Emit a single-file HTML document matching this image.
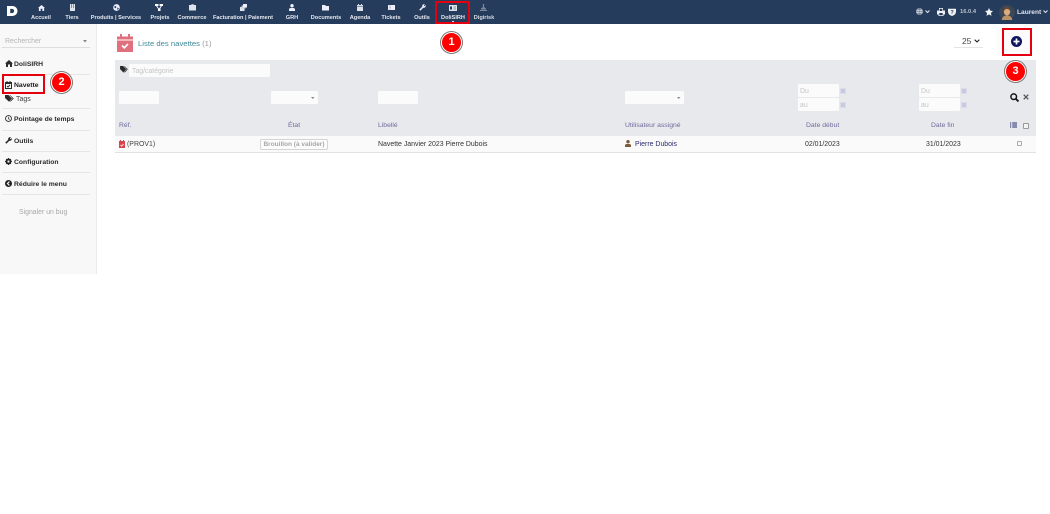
<!DOCTYPE html>
<html lang="fr"><head><meta charset="utf-8"><title>Liste des navettes</title>
<style>
html,body{margin:0;padding:0;background:#fff;width:1050px;height:514px;overflow:hidden;font-family:"Liberation Sans",sans-serif}
.a{position:absolute;white-space:nowrap}
svg{position:absolute;overflow:visible}
#top{position:absolute;left:0;top:0;width:1050px;height:24px;background:#263c5c}
.n{position:absolute;top:14px;width:70px;margin-left:-35px;text-align:center;font-size:5.6px;font-weight:bold;color:#e4e8ee;line-height:8px;white-space:nowrap}
#side{position:absolute;left:0;top:24px;width:96px;height:250px;background:#f8f8f8;border-right:1px solid #ececec}
.m{position:absolute;left:14px;font-size:6.8px;font-weight:bold;color:#2b2b2b;white-space:nowrap;line-height:10px}
.hr{position:absolute;left:2px;width:88px;height:1px;background:#e6e6e6}
.inp{position:absolute;background:#fbfbfb;border-radius:1px}
.th{position:absolute;top:121px;font-size:6.8px;color:#6c6c9c;line-height:10px;white-space:nowrap}
.td{position:absolute;top:140px;font-size:6.95px;color:#333;line-height:10px;white-space:nowrap}
.ph{position:absolute;font-size:6.9px;color:#c4c4c4;line-height:10px}
.cal{position:absolute;width:6px;height:6px;background:#c8c8de;border:1px solid #dcdcec;box-sizing:border-box}
.badge{position:absolute;width:21px;height:21px;border-radius:50%;background:#f00;border:1px solid #fff;box-shadow:0 0 0 1px #777;box-sizing:border-box;color:#fff;font-weight:bold;font-size:11px;line-height:19px;text-align:center}
.red{position:absolute;border:2px solid #e4000f;box-sizing:border-box}
</style></head><body>
<div id="top"></div>
<svg style="left:7px;top:6px" width="11" height="10" viewBox="0 0 12 12" preserveAspectRatio="none"><path fill="#fff" fill-rule="evenodd" d="M0 0H6A5.500 6 0 0 1 6 12H0ZM3.500 3.500V8.500H5.500A2.300 2.500 0 0 0 5.500 3.500Z"/></svg>

<svg style="left:38px;top:5px" width="7" height="6" viewBox="0 0 8 8" preserveAspectRatio="none"><path fill="#eef" d="M4 0 8 4H7V8H5V5H3V8H1V4H0Z"/></svg>
<div class="n" style="left:41px">Accueil</div>
<svg style="left:70px;top:4px" width="5" height="7" viewBox="0 0 5 7"><rect width="5" height="7" fill="#dfe4ea"/><path d="M1 1h1M3 1h1M1 3h1M3 3h1" stroke="#263c5c"/></svg>
<div class="n" style="left:72px">Tiers</div>
<svg style="left:113px;top:4px" width="7" height="7" viewBox="0 0 8 8"><circle cx="4" cy="4" r="3.800" fill="#eef"/><path d="M2 2 4 3 3 5 1.500 4ZM5 4 7 5 5 7Z" fill="#263c5c"/></svg>
<div class="n" style="left:116px">Produits | Services</div>
<svg style="left:155px;top:4px" width="8" height="7" viewBox="0 0 8 7"><path d="M1 1H7M1 1 4 5.500M7 1 4 5.500" stroke="#eef" fill="none"/><rect width="3" height="2" fill="#fff"/><rect x="5" width="3" height="2" fill="#fff"/><rect x="3" y="4.500" width="2.500" height="2.500" fill="#fff"/></svg>
<div class="n" style="left:160px">Projets</div>
<svg style="left:189px;top:4px" width="7" height="7" viewBox="0 0 7 7"><path fill="#dfe4ea" d="M2.300 1V.200H4.700V1H7V6.500H0V1Z"/></svg>
<div class="n" style="left:192px">Commerce</div>
<svg style="left:240px;top:4px" width="7" height="7" viewBox="0 0 7 7"><rect y="3" width="4.500" height="4" fill="#dfe4ea"/><rect x="1.500" y="1.500" width="4" height="3" fill="#c5ccd6"/><rect x="3" width="4" height="3.500" fill="#eef"/></svg>
<div class="n" style="left:243px">Facturation | Paiement</div>
<svg style="left:289px;top:4px" width="6" height="7" viewBox="0 0 6 7"><circle cx="3" cy="1.700" r="1.700" fill="#eef"/><path d="M0 7V5.500Q0 4 2 4H4Q6 4 6 5.500V7Z" fill="#eef"/></svg>
<div class="n" style="left:292px">GRH</div>
<svg style="left:322px;top:5px" width="7" height="6" viewBox="0 0 7 6"><path fill="#eef" d="M0 0H3L4 1H7V5.500H0Z"/></svg>
<div class="n" style="left:326px">Documents</div>
<svg style="left:357px;top:4px" width="6" height="7" viewBox="0 0 6 7"><rect y="1" width="6" height="6" fill="#dfe4ea"/><path d="M1.500 0V1.500M4.500 0V1.500" stroke="#dfe4ea"/><path d="M0 2.500H6" stroke="#263c5c" stroke-width=".5"/></svg>
<div class="n" style="left:360px">Agenda</div>
<svg style="left:388px;top:5px" width="7" height="5" viewBox="0 0 7 5"><rect width="7" height="5" fill="#eef"/><path d="M2 .500V4.500" stroke="#263c5c" stroke-dasharray="1 .6" stroke-width=".5"/></svg>
<div class="n" style="left:391px">Tickets</div>
<svg style="left:419px;top:4px" width="7" height="7" viewBox="0 0 7 7"><path fill="none" stroke="#eef" stroke-width="1.500" d="M.800 6.200 4 3"/><path fill="#eef" d="M3.200 2.500A2 2 0 0 1 6 .300L4.800 1.500 5.500 2.200 6.700 1A2 2 0 0 1 4.300 3.700Z"/></svg>
<div class="n" style="left:422px">Outils</div>
<svg style="left:449px;top:5px" width="8" height="6" viewBox="0 0 8 6"><rect width="8" height="6" rx=".5" fill="#dfe4ea"/><rect x="1" y="1.500" width="2" height="3" fill="#263c5c"/><path d="M4.500 2H7M4.500 4H7" stroke="#263c5c" stroke-width=".6"/></svg>
<div class="n" style="left:453px">DoliSIRH</div>
<div class="a" style="left:452px;top:21px;width:2px;height:1px;background:#dde"></div>
<svg style="left:480px;top:4px" width="7" height="7" viewBox="0 0 7 7"><path fill="#7d8a9c" d="M2.800 0H4.200L4 3 6 4.500V5.500H1V4.500L3 3ZM0 6H7V7H0Z"/></svg>
<div class="n" style="left:484px;color:#d7dce3">Digirisk</div>
<div class="red" style="left:435px;top:1px;width:35px;height:23px"></div>

<svg style="left:916px;top:8px" width="7" height="7" viewBox="0 0 8 8"><circle cx="4" cy="4" r="3.800" fill="#e6eaf0"/><path d="M0 4H8M4 0V8M1 2H7M1 6H7" stroke="#263c5c" stroke-width=".4" fill="none"/><ellipse cx="4" cy="4" rx="1.800" ry="3.800" stroke="#263c5c" stroke-width=".4" fill="none"/></svg>
<svg style="left:925px;top:10px" width="5" height="3" viewBox="0 0 5 3"><path d="M.5.500 2.500 2.500 4.500.500" stroke="#e6eaf0" fill="none"/></svg>
<svg style="left:937px;top:8px" width="8" height="8" viewBox="0 0 8 8"><path fill="#f0f2f5" d="M2 0H6V2.500H7.500Q8 2.500 8 3V6.500H6.500V8H1.500V6.500H0V3Q0 2.500 .5 2.500H2ZM2.700 .8V3H5.300V.8ZM2.300 5V7.200H5.700V5Z"/></svg>
<svg style="left:948px;top:8px" width="8" height="8" viewBox="0 0 8 8"><path fill="#f0f2f5" d="M0 .8H8V3.500Q8 6.800 4 8 0 6.800 0 3.500Z"/><text x="4" y="5.800" font-size="5.500" font-weight="bold" text-anchor="middle" fill="#263c5c" font-family="Liberation Sans">?</text></svg>
<div class="a" style="left:960px;top:8px;font-size:5.800px;font-weight:bold;color:#b8c0cc;line-height:9px">16.0.4</div>
<svg style="left:985px;top:7.500px" width="8" height="8" viewBox="0 0 10 10"><path fill="#f2f4f7" d="M5 0 6.500 3.300 10 3.800 7.400 6.200 8.100 9.800 5 8 1.900 9.800 2.600 6.200 0 3.800 3.500 3.300Z"/></svg>
<svg style="left:999px;top:5px" width="16" height="15" viewBox="0 0 15 15" preserveAspectRatio="none"><circle cx="7.500" cy="7.500" r="7.500" fill="#3c4654"/><path d="M2.500 15Q3 10.500 7.500 10.500 12 10.500 12.500 15Z" fill="#b89266"/><ellipse cx="7.500" cy="6.500" rx="3" ry="4" fill="#d9ab7d"/><path d="M4.500 6Q4.500 2.500 7.500 2.500 10.500 2.500 10.500 6 9 3.800 7.500 4 6 3.800 4.500 6Z" fill="#6b4a2c"/></svg>
<div class="a" style="left:1017px;top:8px;font-size:6.600px;font-weight:bold;color:#dfe4ec;line-height:9px">Laurent</div>
<svg style="left:1043px;top:10px" width="5" height="3" viewBox="0 0 5 3"><path d="M.5.500 2.500 2.500 4.500.500" stroke="#dfe4ec" fill="none"/></svg>

<div id="side"></div>
<div class="a" style="left:5px;top:37px;font-size:7px;color:#b4b4b4;line-height:10px">Rechercher</div>
<svg style="left:83px;top:40px" width="4" height="3" viewBox="0 0 4 3"><path d="M0 0H4L2 2.500Z" fill="#888"/></svg>
<div class="hr" style="top:47px;background:#dedede"></div>
<svg style="left:5px;top:60px" width="8" height="7" viewBox="0 0 8 7"><path fill="#2b2b2b" d="M4 0 8 3.500H7V7H5V4.500H3V7H1V3.500H0Z"/></svg>
<div class="m" style="top:60px">DoliSIRH</div>
<div class="hr" style="top:74px"></div>
<svg style="left:5px;top:81px" width="7" height="8" viewBox="0 0 7 8"><path fill="#2b2b2b" fill-rule="evenodd" d="M0 1H1.500V0H2.500V1H4.500V0H5.500V1H7V8H0ZM1 3V7H6V3Z"/><path d="M2 5 3 6 5 4" stroke="#2b2b2b" fill="none"/></svg>
<div class="m" style="top:81px;color:#1a1a1a">Navette</div>
<svg style="left:5px;top:95px" width="9" height="7" viewBox="0 0 9 7"><path fill="#2b2b2b" d="M0 0H3.500L7 3.500 4 6.800 0 3ZM4.500 0H5L8.800 3.500 5.500 6.800 5 6.300 7.600 3.500Z"/></svg>
<div class="m" style="top:95px;left:16px;font-weight:normal;color:#444;font-size:7px">Tags</div>
<div class="hr" style="top:108px"></div>
<svg style="left:5px;top:115px" width="7" height="7" viewBox="0 0 8 8"><circle cx="4" cy="4" r="3.400" fill="none" stroke="#2b2b2b"/><path d="M4 2V4.300L5.500 5" stroke="#2b2b2b" fill="none" stroke-width=".8"/></svg>
<div class="m" style="top:115px">Pointage de temps</div>
<div class="hr" style="top:130px"></div>
<svg style="left:5px;top:137px" width="7" height="7" viewBox="0 0 7 7"><path fill="none" stroke="#222" stroke-width="1.500" d="M.8 6.200 4 3"/><path fill="#222" d="M3.200 2.500A2 2 0 0 1 6 .3L4.800 1.500 5.500 2.200 6.700 1A2 2 0 0 1 4.300 3.700Z"/></svg>
<div class="m" style="top:137px">Outils</div>
<div class="hr" style="top:151px"></div>
<svg style="left:5px;top:158px" width="7" height="7" viewBox="0 0 8 8"><circle cx="4" cy="4" r="2.600" fill="none" stroke="#222" stroke-width="1.600"/><path d="M4 0V8M0 4H8M1.200 1.200 6.800 6.800M6.800 1.200 1.200 6.800" stroke="#222" stroke-width="1"/><circle cx="4" cy="4" r="1.200" fill="#f8f8f8"/></svg>
<div class="m" style="top:158px">Configuration</div>
<div class="hr" style="top:172px"></div>
<svg style="left:5px;top:180px" width="7" height="7" viewBox="0 0 8 8"><circle cx="4" cy="4" r="4" fill="#222"/><path d="M5 1.800 2.800 4 5 6.200" stroke="#f8f8f8" stroke-width="1.300" fill="none"/></svg>
<div class="m" style="top:180px">Réduire le menu</div>
<div class="hr" style="top:194px"></div>
<div class="a" style="left:19px;top:208px;font-size:6.900px;color:#a8a8a8;line-height:10px">Signaler un bug</div>

<div class="red" style="left:2px;top:74px;width:43px;height:20px"></div>

<svg style="left:117px;top:34px" width="16" height="18" viewBox="0 0 16 18"><path fill="#e0707d" d="M0 2.500H3V0H5V2.500H11V0H13V2.500H16V5.500H0ZM0 6.500H16V17.500Q16 18 15.500 18H.5Q0 18 0 17.500Z"/><path d="M5 11.500 7.300 13.800 11 10" stroke="#fff" stroke-width="1.700" fill="none"/></svg>
<div class="a" style="left:138px;top:38px;font-size:7.700px;color:#3f8a99;line-height:11px">Liste des navettes <span style="color:#999">(1)</span></div>

<div class="a" style="left:962px;top:36px;font-size:8.400px;color:#444;line-height:10px">25</div>
<svg style="left:974px;top:39px" width="6" height="4" viewBox="0 0 6 4"><path d="M.7.700 3 3 5.300.700" stroke="#222" stroke-width="1.100" fill="none"/></svg>
<div class="a" style="left:954px;top:47px;width:29px;height:1px;background:#e4e4e4"></div>
<div class="a" style="left:997px;top:29px;width:35px;height:26px;background:#fbfbfb"></div>
<svg style="left:1011px;top:36px" width="11" height="11" viewBox="0 0 11 11"><circle cx="5.500" cy="5.500" r="5.500" fill="#0c1660"/><path d="M5.500 2.500V8.500M2.500 5.500H8.500" stroke="#fff" stroke-width="1.700"/></svg>
<div class="red" style="left:1002px;top:28px;width:30px;height:28px"></div>

<div class="a" style="left:115px;top:60px;width:921px;height:76px;background:#e8e9ed"></div>
<svg style="left:120px;top:66px" width="8" height="7" viewBox="0 0 9 8"><path fill="#2b2b2b" d="M0 0H3.500L7 3.500 4 7.500 0 3.500ZM4.500 0H5L8.800 3.500 5.500 7.500 5 7 7.600 3.500Z"/></svg>
<div class="inp" style="left:129px;top:64px;width:141px;height:13px"></div>
<div class="ph" style="left:132px;top:67px">Tag/catégorie</div>

<div class="inp" style="left:119px;top:91px;width:40px;height:13px"></div>
<div class="inp" style="left:271px;top:91px;width:47px;height:13px"></div>
<svg style="left:311px;top:97px" width="4" height="2" viewBox="0 0 4 2"><path d="M0 0H3.500L1.750 2Z" fill="#888"/></svg>
<div class="inp" style="left:378px;top:91px;width:40px;height:13px"></div>
<div class="inp" style="left:625px;top:91px;width:59px;height:13px"></div>
<svg style="left:677px;top:97px" width="4" height="2" viewBox="0 0 4 2"><path d="M0 0H3.500L1.750 2Z" fill="#888"/></svg>

<div class="inp" style="left:798px;top:84px;width:41px;height:13px"></div>
<div class="ph" style="left:800px;top:87px">Du</div>
<div class="cal" style="left:840px;top:88px"></div>
<div class="inp" style="left:798px;top:98px;width:41px;height:13px"></div>
<div class="ph" style="left:800px;top:101px">au</div>
<div class="cal" style="left:840px;top:102px"></div>
<div class="inp" style="left:919px;top:84px;width:41px;height:13px"></div>
<div class="ph" style="left:921px;top:87px">Du</div>
<div class="cal" style="left:961px;top:88px"></div>
<div class="inp" style="left:919px;top:98px;width:41px;height:13px"></div>
<div class="ph" style="left:921px;top:101px">au</div>
<div class="cal" style="left:961px;top:102px"></div>

<svg style="left:1010px;top:93px" width="9" height="9" viewBox="0 0 9 9"><circle cx="3.700" cy="3.700" r="2.800" fill="none" stroke="#111" stroke-width="1.500"/><path d="M5.800 5.800 8.500 8.500" stroke="#111" stroke-width="1.800"/></svg>
<svg style="left:1023px;top:94px" width="6" height="6" viewBox="0 0 6 6"><path d="M.7.700 5.300 5.300M5.300.700 .7 5.300" stroke="#555" stroke-width="1.300"/></svg>

<div class="th" style="left:119px">Réf.</div>
<div class="th" style="left:288px">État</div>
<div class="th" style="left:378px">Libellé</div>
<div class="th" style="left:625px">Utilisateur assigné</div>
<div class="th" style="left:806px">Date début</div>
<div class="th" style="left:931px">Date fin</div>
<svg style="left:1010px;top:122px" width="7" height="6" viewBox="0 0 7 6"><path d="M2.200 1H7M2.200 3H7M2.200 5H7" stroke="#26306e"/><path d="M0 1H1.200M0 3H1.200M0 5H1.200" stroke="#26306e"/></svg>
<div class="a" style="left:1023px;top:123px;width:6px;height:6px;border:1px solid #999;border-radius:1px;background:#f4f4f4;box-sizing:border-box"></div>

<div class="a" style="left:115px;top:136px;width:921px;height:16px;background:#fafafa;border-bottom:1px solid #e2e2e2"></div>
<svg style="left:119px;top:140px" width="6" height="8" viewBox="0 0 6 8"><path fill="#d8434f" d="M0 1H1V0H2V1H4V0H5V1H6V8H0Z"/><path d="M1.500 5 2.700 6.200 4.500 4" stroke="#fff" stroke-width=".8" fill="none"/></svg>
<div class="td" style="left:127px;color:#444">(PROV1)</div>
<div class="a" style="left:260px;top:139px;width:68px;height:11px;border:1px solid #d4d4d4;border-radius:2px;box-sizing:border-box;background:#fcfcfc;text-align:center;font-size:6.500px;font-weight:bold;color:#a6a6a6;line-height:9px">Brouillon (à valider)</div>
<div class="td" style="left:378px">Navette Janvier 2023 Pierre Dubois</div>
<svg style="left:625px;top:140px" width="6" height="7" viewBox="0 0 6 7"><circle cx="3" cy="1.700" r="1.700" fill="#7c5a3a"/><path d="M0 7V5.500Q0 4 2 4H4Q6 4 6 5.500V7Z" fill="#7c5a3a"/></svg>
<div class="td" style="left:635px;color:#2c2c6c">Pierre Dubois</div>
<div class="td" style="left:805px">02/01/2023</div>
<div class="td" style="left:926px">31/01/2023</div>
<div class="a" style="left:1017px;top:141px;width:5px;height:5px;border:1px solid #aaa;border-radius:1px;background:#fafafa;box-sizing:border-box"></div>

<div class="badge" style="left:51px;top:72px">2</div>
<div class="badge" style="left:441px;top:32px">1</div>
<div class="badge" style="left:1005px;top:61px">3</div>
</body></html>
